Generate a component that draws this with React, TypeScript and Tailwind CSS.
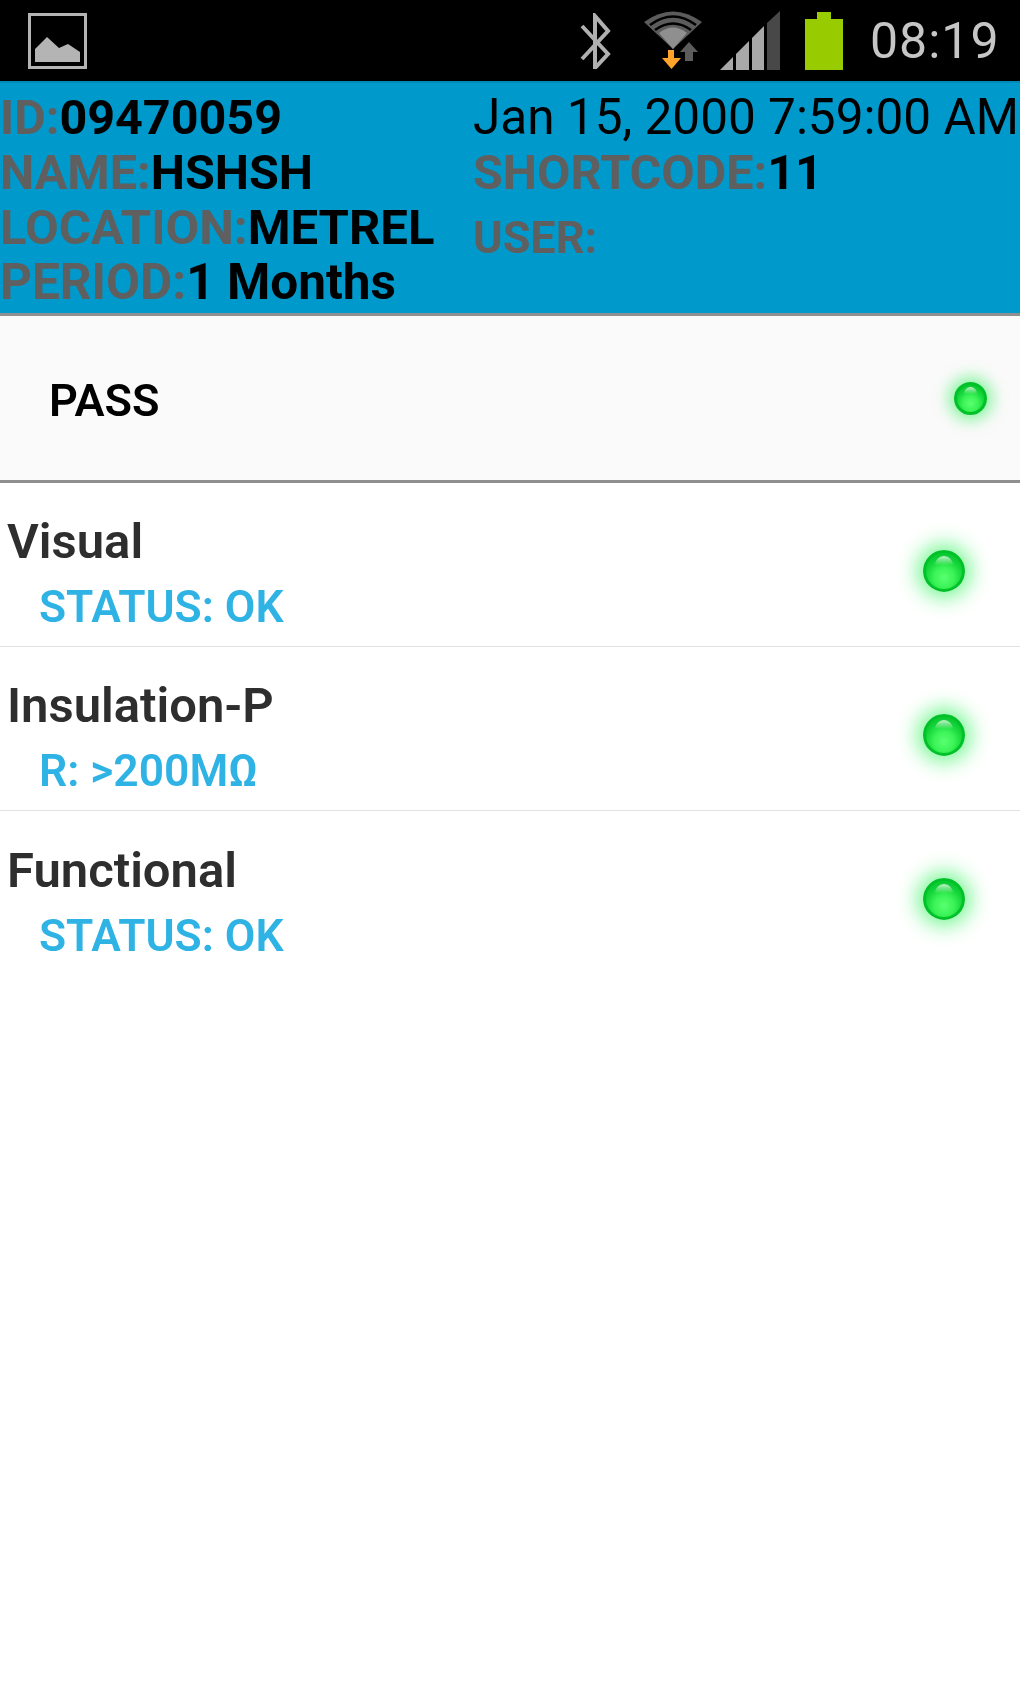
import React from "react";

function Led({ large }: { large?: boolean }) {
  return (
    <div
      className={
        large
          ? "relative h-[42px] w-[42px] rounded-full border-[3px] border-[#00c228] bg-[radial-gradient(circle_at_50%_68%,#5aff70_0%,#3cf458_32%,#12d438_62%,#03b826_100%)] shadow-[0_0_20px_6px_rgba(10,240,60,0.55)]"
          : "relative h-[33px] w-[33px] rounded-full border-[3px] border-[#00c228] bg-[radial-gradient(circle_at_50%_68%,#5aff70_0%,#3cf458_32%,#12d438_62%,#03b826_100%)] shadow-[0_0_15px_5px_rgba(10,240,60,0.5)]"
      }
    >
      <div
        className={
          large
            ? "absolute left-[9px] top-[3px] h-[9px] w-[18px] rounded-t-full bg-gradient-to-b from-[#c6f2cc] to-transparent"
            : "absolute left-[7px] top-[2px] h-[7px] w-[13px] rounded-t-full bg-gradient-to-b from-[#c6f2cc] to-transparent"
        }
      ></div>
    </div>
  );
}

function Row({ title, value }: { title: string; value: string }) {
  return (
    <div className="flex h-[164px] items-center justify-between border-b border-[#e2e2e2] pl-[7px] pr-[55px] pt-[12px] last:border-b-0">
      <div className="flex flex-col pt-[9px] blur-[0.6px]">
        <span className="text-[49px] leading-[64px] font-semibold text-[#2e2e2e]">{title}</span>
        <span className="pl-[32px] text-[44.4px] leading-[66px] font-semibold text-[#2fb3e5]">{value}</span>
      </div>
      <Led large />
    </div>
  );
}

function Label({ name, value, size }: { name: string; value?: string; size?: string }) {
  return (
    <div className={`h-[55px] leading-[55px] font-bold whitespace-nowrap blur-[0.6px] ${size ?? "text-[48.5px]"}`}>
      <span className="text-[#5f5f5f]">{name}</span>
      <span className="text-black">{value}</span>
    </div>
  );
}

export default function App() {
  return (
    <div className="flex h-[1700px] w-[1020px] flex-col overflow-hidden bg-white font-['Roboto',sans-serif]">
      <div className="flex h-[81px] items-center justify-between bg-black pl-[28px] pr-[23px]">
        <svg width="60" height="56" viewBox="0 0 60 56" className="blur-[0.5px]">
          <rect x="1.5" y="1.5" width="56" height="53" fill="none" stroke="#b4b4b4" strokeWidth="3" />
          <path d="M7 49V36L19 24L31 35L40 31L52 39V49Z" fill="#b4b4b4" />
        </svg>
        <div className="flex items-center">
          <svg width="32" height="56" viewBox="0 0 32 56" className="mr-[32px] blur-[0.5px]">
            <path d="M2 13L28 41L15 55V3L28 18L2 46" fill="none" stroke="#b0b0b0" strokeWidth="4" />
          </svg>
          <svg width="60" height="60" viewBox="0 0 60 60" className="mr-[16px] blur-[0.4px]">
            <path d="M0 11Q29 -10 58 11L29 38Z" fill="#5c5c5c" />
            <path d="M6 14Q29 -3 52 14" fill="none" stroke="#000" strokeWidth="2.5" />
            <path d="M11 19Q29 6 47 19" fill="none" stroke="#000" strokeWidth="2.5" />
            <path d="M15 22Q29 11 43 22L29 38Z" fill="#8f8f8f" />
            <path d="M36 41L45 31L54 41H49V50H41V41Z" fill="#5c5c5c" />
            <path d="M24 39H30V47H37L27.5 58L18 47H24Z" fill="#ffa32b" />
          </svg>
          <svg width="60" height="59" viewBox="0 0 60 59" className="mr-[25px] blur-[0.4px]">
            <path d="M0 59L13 46V59Z" fill="#a8a8a8" />
            <path d="M16 43L29 30V59H16Z" fill="#a8a8a8" />
            <path d="M32 27L44 15V59H32Z" fill="#a8a8a8" />
            <path d="M47 12L60 0V59H47Z" fill="#484848" />
          </svg>
          <svg width="38" height="58" viewBox="0 0 38 58" className="mr-[27px]">
            <path d="M12 0H26V7H38V58H0V7H12Z" fill="#99cc00" />
          </svg>
          <span className="w-[127px] pt-[2px] text-[50px] leading-[81px] tracking-[1px] whitespace-nowrap text-[#c6c6c6] blur-[0.5px]">08:19</span>
        </div>
      </div>

      <div className="flex h-[235px] border-t-2 border-b-[3px] border-t-[#0088b8] border-b-[#8f8f8f] bg-[#0099cc] pt-[7px]">
        <div className="w-[473px] shrink-0">
          <Label name="ID:" value="09470059" />
          <Label name="NAME:" value="HSHSH" />
          <Label name="LOCATION:" value="METREL" size="text-[49px]" />
          <Label name="PERIOD:" value="1 Months" size="text-[49.5px]" />
        </div>
        <div className="flex-1">
          <div className="h-[55px] text-[49.5px] leading-[55px] whitespace-nowrap text-black blur-[0.6px]">Jan 15, 2000 7:59:00 AM</div>
          <Label name="SHORTCODE:" value="11" />
          <div className="mt-[10px]">
            <Label name="USER:" size="text-[45px]" />
          </div>
        </div>
      </div>

      <div className="flex h-[167px] items-center justify-between border-b-[3px] border-[#8f8f8f] bg-[#fafafa] pl-[49px] pr-[33px]">
        <span className="pt-[6px] text-[45px] font-semibold text-black blur-[0.6px]">PASS</span>
        <Led />
      </div>

      <div className="flex flex-col">
        <Row title="Visual" value="STATUS: OK" />
        <Row title="Insulation-P" value="R: >200MΩ" />
        <Row title="Functional" value="STATUS: OK" />
      </div>
    </div>
  );
}
